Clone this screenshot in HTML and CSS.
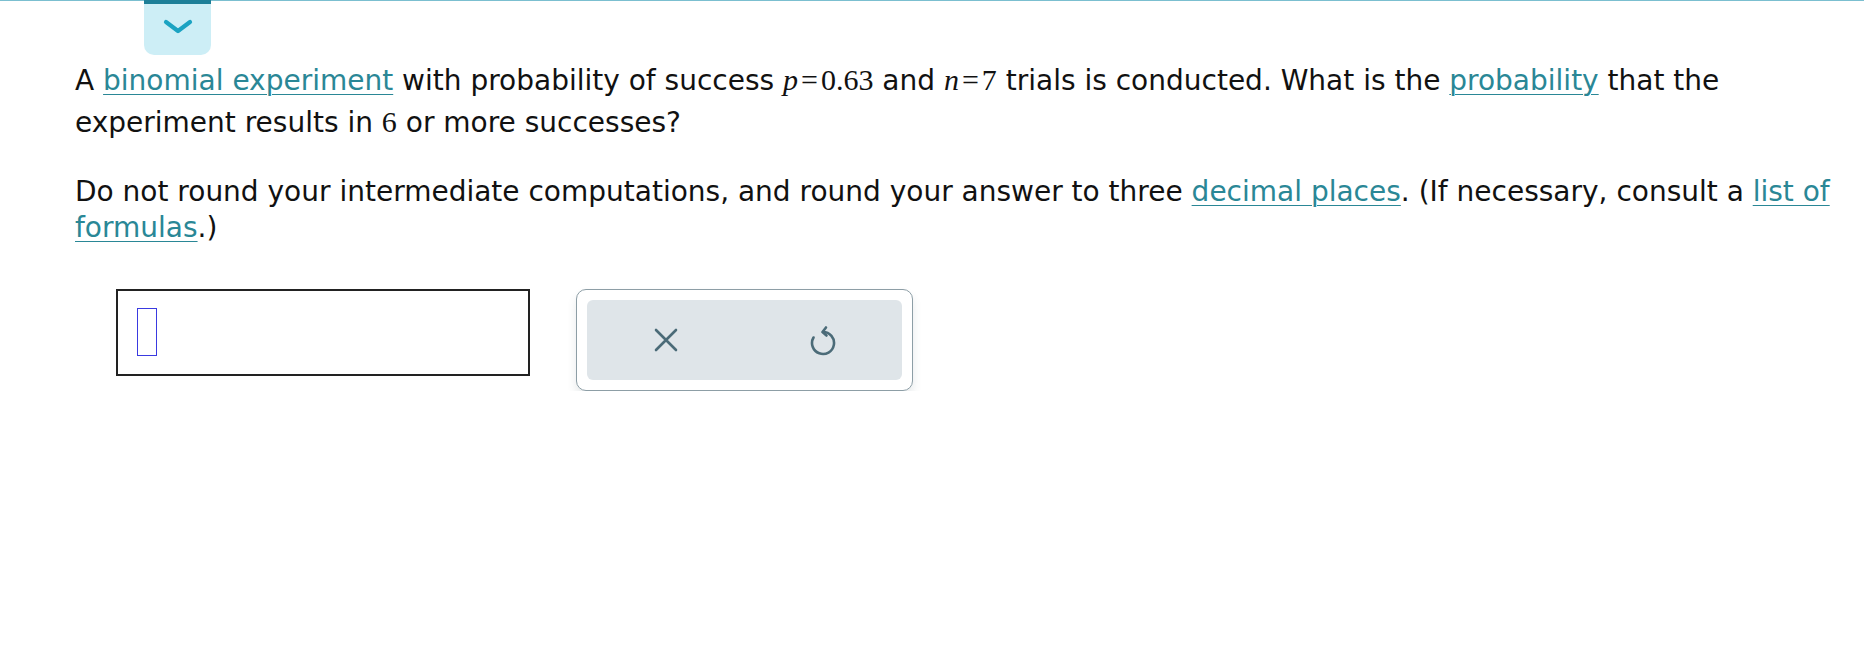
FILE: index.html
```html
<!DOCTYPE html>
<html>
<head>
<meta charset="utf-8">
<link rel="stylesheet" href="styles.css">
</head>
<body>
<div class="header">
  <div class="tab">
    <svg class="chev" width="30" height="16" viewBox="0 0 30 16"><polyline points="3,3 15,12 27,3" fill="none" stroke="#1ba3c2" stroke-width="4.2" stroke-linecap="round" stroke-linejoin="round"/></svg>
  </div>
</div>
<div class="content">
  <p class="q q1"><span>A </span><a href="#">binomial experiment</a><span> with probability of success </span><span class="m"><i>p</i><span class="eq">=</span>0.63</span><span> and </span><span class="m"><i>n</i><span class="eq">=</span>7</span><span> trials is conducted. What is the </span><a href="#">probability</a><span> that the</span><br><span>experiment results in </span><span class="m">6</span><span> or more successes?</span></p>
  <p class="q q2"><span>Do not round your intermediate computations, and round your answer to three </span><a href="#">decimal places</a><span>. (If necessary, consult a </span><a href="#">list of</a><br><a href="#">formulas</a><span>.)</span></p>
  <div class="answer">
    <div class="input"><span class="cursor"></span></div>
    <div class="tools">
      <div class="tools-inner">
        <button class="tbtn" aria-label="clear">
          <svg width="26" height="26" viewBox="0 0 26 26"><path d="M3 3 L23 23 M23 3 L3 23" stroke="#4b6b78" stroke-width="2.6" stroke-linecap="round"/></svg>
        </button>
        <button class="tbtn" aria-label="reset">
          <svg width="30" height="32" viewBox="0 0 30 32"><path d="M15 8 A11 11 0 1 1 5.5 13.5" fill="none" stroke="#4b6b78" stroke-width="2.6" stroke-linecap="round"/><polyline points="18,3.5 14.5,8 18.5,11.5" fill="none" stroke="#4b6b78" stroke-width="2.6" stroke-linecap="round" stroke-linejoin="round"/></svg>
        </button>
      </div>
    </div>
  </div>
</div>
</body>
</html>
```
FILE: styles.css
```css
html, body { margin: 0; padding: 0; background: #fff; }
body { font-family: "DejaVu Sans", Verdana, sans-serif; color: #111; }
.header { border-top: 1px solid #7bbfd0; height: 54px; }
.tab {
  margin-left: 144px; margin-top: -1px;
  width: 67px; height: 55px; padding-bottom: 5px; box-sizing: border-box;
  background: #cdeef6;
  border-top: 4px solid #1d7f98;
  border-radius: 0 0 10px 10px;
  display: flex; justify-content: center; align-items: center;
}
.content { padding-left: 75px; padding-right: 20px; }
.q { margin: 0; font-size: 28px; line-height: 36px; white-space: nowrap; }
.q1 { margin-top: 5px; line-height: 42px; }
.q2 { margin-top: 30px; }
.q a { color: #2a8796; text-decoration: underline; text-underline-offset: 4px; text-decoration-thickness: 1px; }
.m { font-family: "Liberation Serif", "Times New Roman", serif; font-size: 30px; line-height: 1; }
.eq { margin: 0 3px; }
.answer { display: flex; align-items: flex-start; gap: 46px; margin-top: 43px; margin-left: 41px; }
.input {
  width: 414px; height: 87px; border: 2px solid #222; box-sizing: border-box;
  display: flex; align-items: flex-start; padding: 17px 0 0 19px;
}
.cursor { width: 20px; height: 48px; border: 1.5px solid #3a3ae0; box-sizing: border-box; }
.tools {
  width: 315px; height: 80px; padding: 10px;
  border: 1px solid #8d9ea6; border-radius: 10px; background: #fff;
  box-shadow: 0 6px 10px rgba(60, 80, 90, 0.12);
}
.tools-inner {
  height: 100%; background: #dfe5e9; border-radius: 6px;
  display: flex; justify-content: space-around; align-items: center;
}
.tbtn { background: none; border: 0; padding: 0; width: 60px; height: 60px; display: flex; align-items: center; justify-content: center; }
```
